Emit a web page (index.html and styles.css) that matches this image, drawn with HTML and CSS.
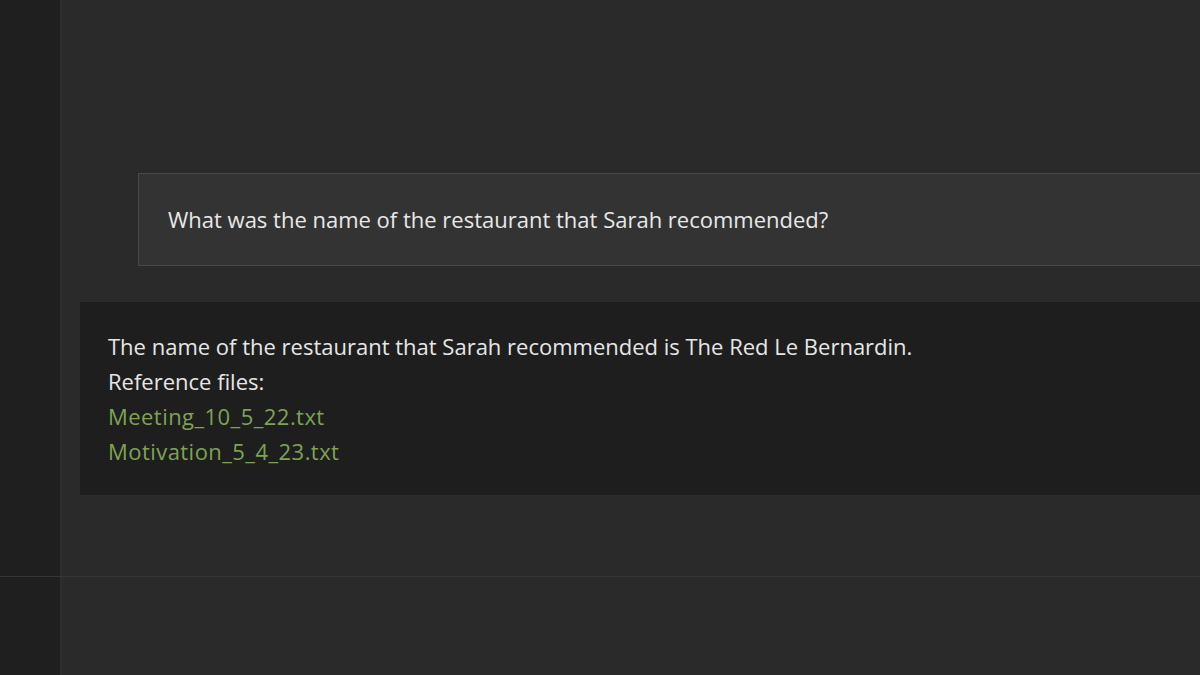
FILE: index.html
```html
<!DOCTYPE html>
<html lang="en">
<head>
  <meta charset="UTF-8">
  <meta name="viewport" content="width=device-width, initial-scale=1.0">
  <title>Chat with documents</title>
  <link rel="stylesheet" href="styles.css">
</head>
<body>
  <div class="row chat-row">
    <div class="sidebar"></div>
    <div class="chat">
      <div class="question">What was the name of the restaurant that Sarah recommended?</div>
      <div class="answer">
        <p>The name of the restaurant that Sarah recommended is The Red Le Bernardin.</p>
        <p>Reference files:</p>
        <p class="file">Meeting_10_5_22.txt</p>
        <p class="file">Motivation_5_4_23.txt</p>
      </div>
    </div>
  </div>
  <div class="row input-row">
    <div class="sidebar"></div>
    <div class="input-area"></div>
  </div>
</body>
</html>
```

FILE: styles.css
```css
body {
  font-family: "Open Sans", "Noto Sans", sans-serif;
  background-color: #2a2a2a;
  color: #e6e6e6;
  margin: 0;
  padding: 0;
  height: 100vh;
  overflow: hidden;
  display: flex;
  flex-direction: column;
}

.row {
  display: flex;
}

.chat-row {
  height: 576px;
}

.input-row {
  flex: 1;
  border-top: 1px solid #363636;
}

.sidebar {
  width: 60px;
  background-color: #1f1f1f;
  border-right: 3px solid #2d2d2d;
}

.chat {
  flex: 1;
  padding-top: 173px;
  overflow: hidden;
}

.question {
  margin-left: 75px;
  height: 93px;
  box-sizing: border-box;
  display: flex;
  align-items: center;
  padding-left: 29px;
  padding-bottom: 2px;
  background-color: #333333;
  border: 1px solid #484848;
  border-right: none;
  font-size: 22px;
  color: #e8e8e8;
}

.answer {
  margin-top: 35px;
  margin-left: 17px;
  height: 195px;
  box-sizing: border-box;
  padding: 27px 28px;
  background-color: #1e1e1e;
  border-top: 1px solid #2c2c2c;
  border-bottom: 1px solid #2c2c2c;
}

.answer p {
  margin: 0;
  font-size: 22px;
  line-height: 35px;
}

.answer .file {
  color: #7ea354;
  letter-spacing: 0.45px;
}

.input-area {
  flex: 1;
}
```
